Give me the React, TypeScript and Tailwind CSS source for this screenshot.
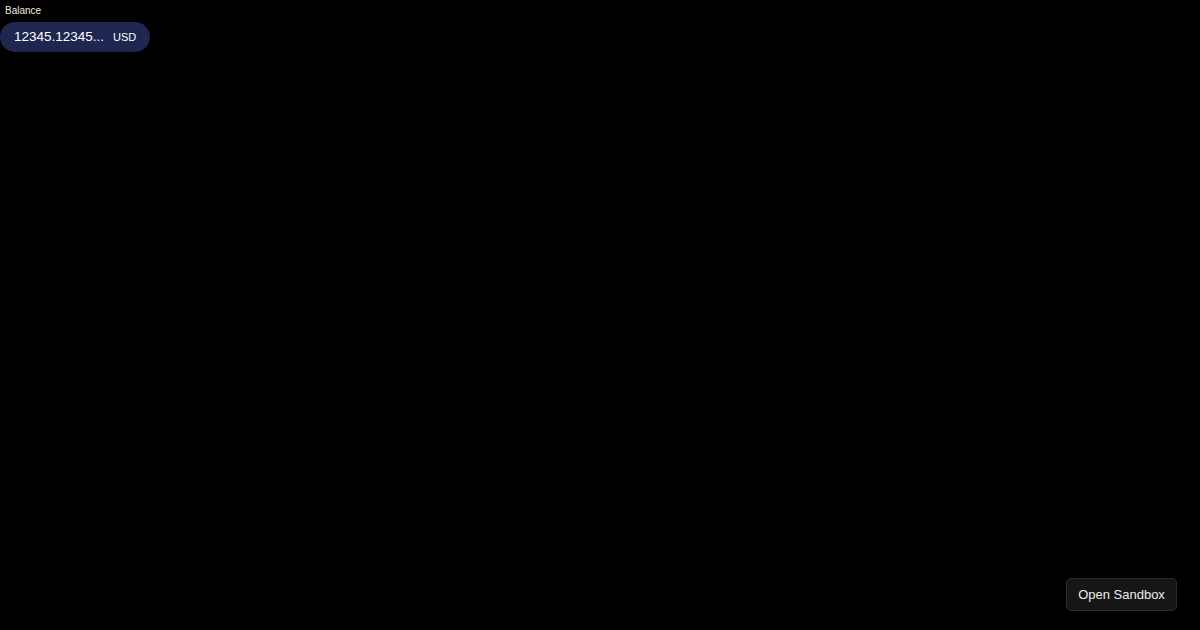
export default function App() {
  return (
    <div className="relative w-[1200px] h-[630px] bg-black font-['Liberation_Sans',Arial,sans-serif] overflow-hidden">
      <div className="flex flex-col items-start">
        <span className="pl-[5px] pt-[5px] text-[10px] leading-[12px] text-[#f3ead8]">Balance</span>
        <div className="mt-[5px] flex h-[30px] w-[150px] items-center rounded-full bg-[#1f2750] pl-[14px] pr-[14px] pt-px">
          <span className="text-[13.5px] text-white">12345.12345...</span>
          <span className="ml-[9px] text-[11px] text-white">USD</span>
        </div>
      </div>
      <button className="absolute bottom-[19px] right-[23px] h-[33px] w-[111px] rounded-[5px] border border-[#2b2b2b] bg-[#161616] text-[13px] text-[#ececec]">
        Open Sandbox
      </button>
    </div>
  );
}
